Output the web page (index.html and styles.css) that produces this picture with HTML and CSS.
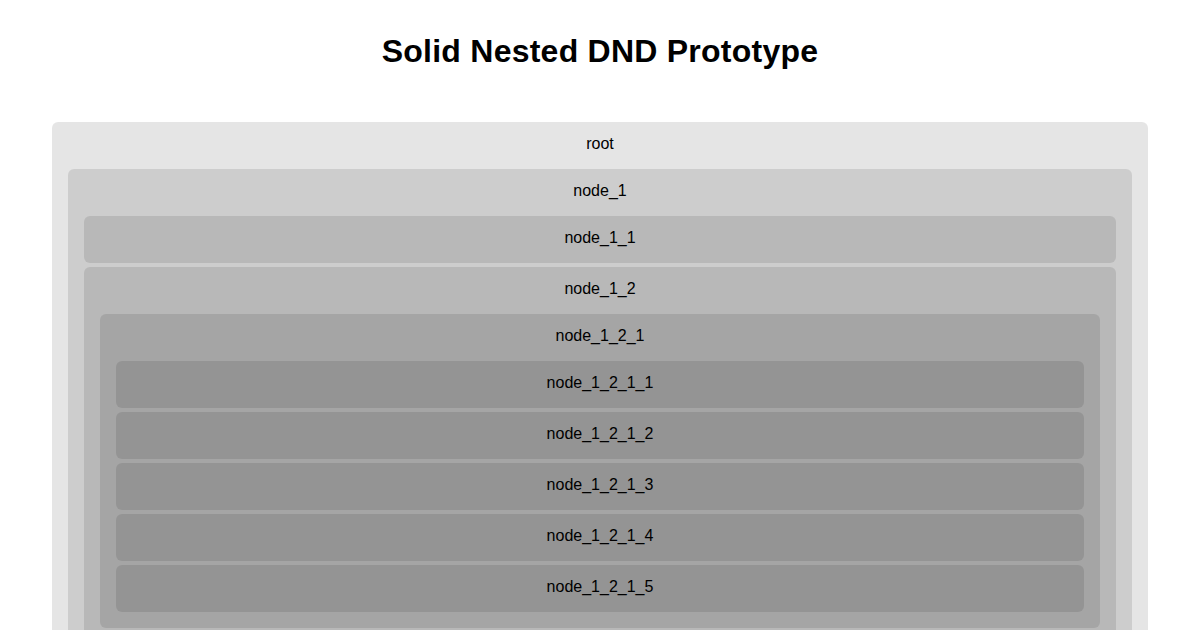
FILE: index.html
```html
<!DOCTYPE html>
<html lang="en">

<head>
    <meta charset="UTF-8">
    <meta name="viewport" content="width=device-width, initial-scale=1.0">
    <title>Solid Nested DND Prototype</title>
    <link rel="stylesheet" href="styles.css">
</head>

<body>
    <div class="app">
        <h1>Solid Nested DND Prototype</h1>

        <div class="node">
            <div class="node-label">root</div>
            <div class="node-children">
                <div class="node">
                    <div class="node-label">node_1</div>
                    <div class="node-children">
                        <div class="node">
                            <div class="node-label">node_1_1</div>
                        </div>
                        <div class="node">
                            <div class="node-label">node_1_2</div>
                            <div class="node-children">
                                <div class="node">
                                    <div class="node-label">node_1_2_1</div>
                                    <div class="node-children">
                                        <div class="node">
                                            <div class="node-label">node_1_2_1_1</div>
                                        </div>
                                        <div class="node">
                                            <div class="node-label">node_1_2_1_2</div>
                                        </div>
                                        <div class="node">
                                            <div class="node-label">node_1_2_1_3</div>
                                        </div>
                                        <div class="node">
                                            <div class="node-label">node_1_2_1_4</div>
                                        </div>
                                        <div class="node">
                                            <div class="node-label">node_1_2_1_5</div>
                                        </div>
                                    </div>
                                </div>
                            </div>
                        </div>
                    </div>
                </div>
            </div>
        </div>
    </div>
</body>

</html>
```

FILE: styles.css
```css
body {
    font-family: "Liberation Sans", Arial, sans-serif;
    background-color: #ffffff;
    color: #000000;
    margin: 0;
}

.app {
    padding: 0 52px 40px;
}

h1 {
    font-size: 32px;
    line-height: 37px;
    font-weight: bold;
    letter-spacing: 0.24px;
    text-align: center;
    margin: 33px 0 52px;
}

.node {
    background-color: rgba(0, 0, 0, 0.1);
    border-radius: 6px;
    padding: 12px 16px 16px;
}

.node-label {
    font-size: 16px;
    line-height: 19px;
    text-align: center;
}

.node-children {
    display: flex;
    flex-direction: column;
    gap: 4px;
    margin-top: 16px;
}
```
